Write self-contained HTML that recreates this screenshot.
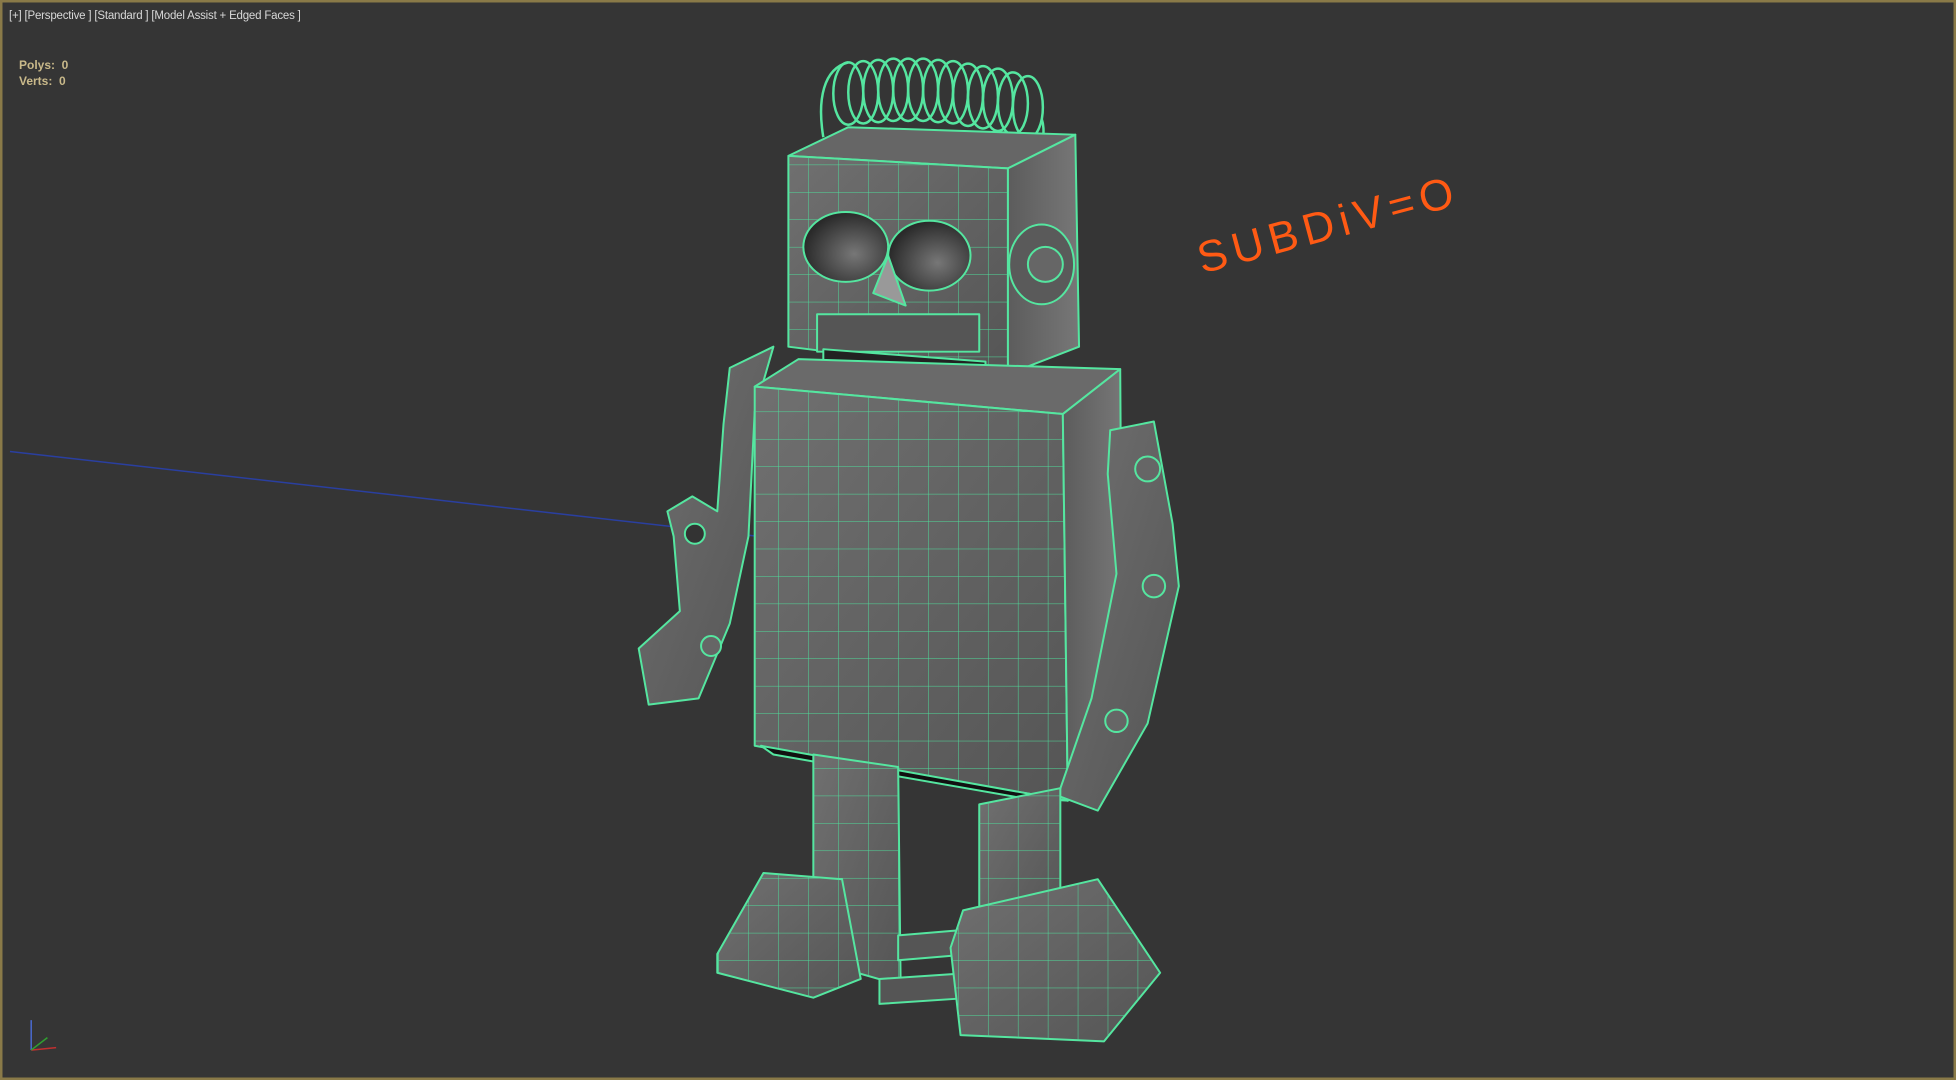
<!DOCTYPE html>
<html><head><meta charset="utf-8"><style>
html,body{margin:0;padding:0;background:#353535;width:1956px;height:1080px;overflow:hidden}
svg{position:absolute;left:0;top:0}
.t{position:absolute;font-family:"Liberation Sans",sans-serif;font-size:11.5px;color:#d8d8d8;left:9px;top:10px;letter-spacing:-0.2px}
.s{position:absolute;font-family:"Liberation Sans",sans-serif;font-size:12px;font-weight:bold;color:#c9b98a;left:19px;line-height:16px;top:57px}
.h{position:absolute;left:1192px;top:236px;font-family:"Liberation Sans",sans-serif;font-size:44px;color:#ff5a14;letter-spacing:6px;transform:rotate(-15deg);transform-origin:left top;font-weight:300}
</style></head><body>
<svg width="1956" height="1080" viewBox="0 0 1568 866" preserveAspectRatio="none">
<defs>
<linearGradient id="g" x1="0" y1="0" x2="1" y2="1"><stop offset="0" stop-color="#707070"/><stop offset="1" stop-color="#555"/></linearGradient>
<linearGradient id="g2" x1="0" y1="0" x2="1" y2="0"><stop offset="0" stop-color="#5c5c5c"/><stop offset="1" stop-color="#777"/></linearGradient>
<radialGradient id="e" cx="0.6" cy="0.6" r="0.6"><stop offset="0" stop-color="#777"/><stop offset="1" stop-color="#2a2a2a"/></radialGradient>
<pattern id="p" width="24" height="22" patternUnits="userSpaceOnUse"><path d="M0 0H24M0 0V22" stroke="#4fdc9a" stroke-width="0.8" fill="none"/></pattern>
</defs>
<rect x="1" y="1" width="1566" height="864" fill="#353535" stroke="#8a7a48" stroke-width="2"/>
<line x1="8" y1="362" x2="660" y2="436" stroke="#2a3fa0" stroke-width="1.2"/>
<g stroke="#55e6a0" stroke-width="1.6" stroke-linejoin="round">
<g fill="none" stroke-width="2">
<path d="M660 110 C655 80 660 55 680 50"/><path d="M835 95 C840 110 832 130 822 150"/>
<ellipse cx="680" cy="75" rx="12" ry="25"/><ellipse cx="692" cy="74" rx="12" ry="25"/><ellipse cx="704" cy="73" rx="12" ry="25"/><ellipse cx="716" cy="72" rx="12" ry="25"/><ellipse cx="728" cy="72" rx="12" ry="25"/><ellipse cx="740" cy="72" rx="12" ry="25"/><ellipse cx="752" cy="73" rx="12" ry="25"/><ellipse cx="764" cy="74" rx="12" ry="25"/><ellipse cx="776" cy="76" rx="12" ry="25"/><ellipse cx="788" cy="78" rx="12" ry="25"/><ellipse cx="800" cy="80" rx="12" ry="25"/><ellipse cx="812" cy="83" rx="12" ry="25"/><ellipse cx="824" cy="86" rx="12" ry="25"/>
</g>
<polygon points="632,125 680,102 862,108 808,135" fill="#666"/>
<polygon points="632,125 808,135 808,300 632,278" fill="url(#g)"/>
<polygon points="632,125 808,135 808,300 632,278" fill="url(#p)" stroke="none"/>
<polygon points="808,135 862,108 865,278 808,300" fill="url(#g2)"/>
<ellipse cx="678" cy="198" rx="34" ry="28" fill="url(#e)"/><ellipse cx="745" cy="205" rx="33" ry="28" fill="url(#e)"/>
<polygon points="700,235 712,205 726,245" fill="#999"/>
<rect x="655" y="252" width="130" height="30" fill="#555"/>
<ellipse cx="835" cy="212" rx="26" ry="32" fill="#5a5a5a"/><circle cx="838" cy="212" r="14" fill="#666"/>
<polygon points="660,280 790,290 790,305 660,295" fill="#222"/>
<polygon points="585,295 620,278 605,330 600,430 585,500 560,560 520,565 512,520 545,490 540,430 535,410 555,398 575,410 580,340" fill="url(#g)"/>
<circle cx="557" cy="428" r="8" fill="#333"/>
<circle cx="570" cy="518" r="8" fill="#666"/>
<polygon points="605,310 640,288 898,296 852,332" fill="#6a6a6a"/>
<polygon points="605,310 852,332 856,642 605,598" fill="url(#g)"/>
<polygon points="605,310 852,332 856,642 605,598" fill="url(#p)" stroke="none"/>
<polygon points="852,332 898,296 900,600 856,642" fill="url(#g2)"/>
<polygon points="610,598 856,642 820,640 620,605" fill="#111"/>
<polygon points="890,345 925,338 940,420 945,470 920,580 880,650 848,638 875,560 895,460 888,380" fill="url(#g)"/>
<circle cx="920" cy="376" r="10" fill="#666"/><circle cx="925" cy="470" r="9" fill="#666"/><circle cx="895" cy="578" r="9" fill="#666"/>
<polygon points="652,605 720,615 722,790 652,770" fill="url(#g)"/>
<polygon points="652,605 720,615 722,790 652,770" fill="url(#p)" stroke="none"/>
<polygon points="785,645 850,632 850,730 785,745" fill="url(#g)"/>
<polygon points="785,645 850,632 850,730 785,745" fill="url(#p)" stroke="none"/>
<polygon points="720,750 780,745 780,765 720,770" fill="#555"/>
<polygon points="705,785 780,780 780,800 705,805" fill="#555"/>
<polygon points="612,700 675,705 690,785 652,800 575,780 575,765" fill="url(#g)"/>
<polygon points="612,700 675,705 690,785 652,800 575,780 575,765" fill="url(#p)" stroke="none"/>
<polygon points="772,730 880,705 930,780 885,835 770,830 762,760" fill="url(#g)"/>
<polygon points="772,730 880,705 930,780 885,835 770,830 762,760" fill="url(#p)" stroke="none"/>
</g>
<g stroke-width="1.2"><line x1="25" y1="842" x2="25" y2="818" stroke="#4a6ad0"/><line x1="25" y1="842" x2="45" y2="840" stroke="#c03030"/><line x1="25" y1="842" x2="38" y2="832" stroke="#30a030"/></g>
</svg>
<div class="t">[+] [Perspective ] [Standard ] [Model Assist + Edged Faces ]</div>
<div class="s">Polys:&nbsp; 0<br>Verts:&nbsp; 0</div>
<div class="h">SUBDiV=O</div>
</body></html>
